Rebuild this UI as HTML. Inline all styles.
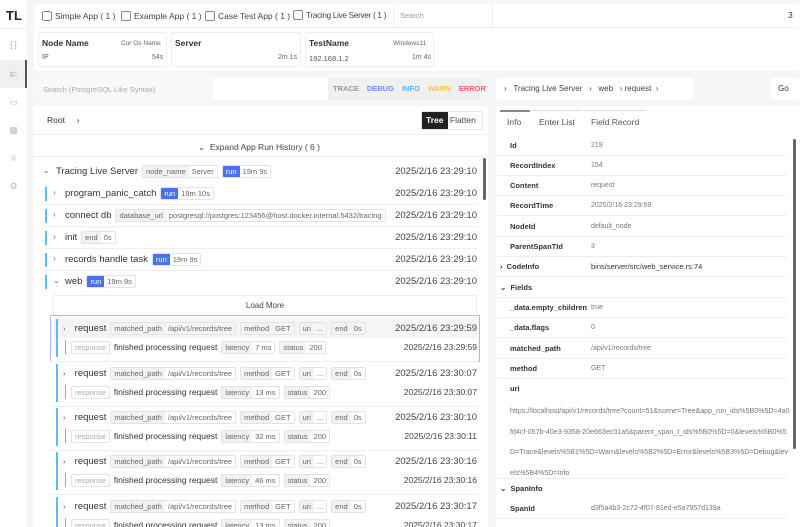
<!DOCTYPE html>
<html><head><meta charset="utf-8"><style>
*{box-sizing:border-box;margin:0;padding:0}
html,body{width:800px;height:527px;overflow:hidden}
body{background:#f5f6f8;font-family:"Liberation Sans",sans-serif;font-size:9px;color:#333;position:relative}
.a{position:absolute}
.side{left:0;top:0;width:27px;height:527px;background:#fff}
.ico{position:absolute;left:7px;width:13px;height:10px;color:#bbb;font-size:9px;text-align:center}
.w{background:#fff}
.cb{display:inline-block;width:10px;height:10px;border:1px solid #888;border-radius:2px;vertical-align:-2px;margin-right:3px}
.card{background:#fff;border:1px solid #eee;border-radius:2px}
.fx{display:flex;align-items:center;white-space:nowrap}
.tag{display:flex;border:1px solid #e3e3e3;border-radius:2px;font-size:7.5px;line-height:11px;margin-left:4px;overflow:hidden;white-space:nowrap;height:13px}
.tag b{font-weight:normal;background:#f2f2f2;color:#666;padding:0 3px;line-height:11px}
.tag i{font-style:normal;padding:0 3px;color:#666;line-height:11px}
.run b{background:#4a73e8;color:#fff}
.row{position:absolute;left:45px;width:432px;height:22px;border-bottom:1px solid #eee;font-size:9.5px}
.row .bar{position:absolute;left:0;top:4px;width:2px;height:14px;background:#5bbcf5}
.row .ch{position:absolute;left:8px;top:5px;color:#666;font-size:8px}
.row .t{position:absolute;left:20px;top:0;height:21px}
.row .d{position:absolute;right:0;top:5px;font-size:9.5px;color:#444}
.sub{position:absolute;height:18px;font-size:8.5px}
.kv{position:absolute;left:497px;width:290px;height:20px;line-height:20px;border-bottom:1px solid #eee;font-size:7px;color:#777;background:#fff}
.kv b{position:absolute;left:13px;color:#333;font-size:7.5px}
.kv span{position:absolute;left:94px}
</style></head><body>
<div class="a side">
 <div class="a" style="left:6px;top:8px;font-size:13px;font-weight:bold;color:#222">TL</div>
 <div class="a" style="left:0;top:28px;width:27px;height:1px;background:#eee"></div>
 <div class="ico" style="top:40px">⁅⁆</div>
 <div class="a" style="left:0;top:60px;width:27px;height:28px;background:#f0f0f0;border-right:2px solid #555"></div>
 <div class="ico" style="top:69px">⇇</div>
 <div class="ico" style="top:97px">▭</div>
 <div class="ico" style="top:125px">▦</div>
 <div class="ico" style="top:153px">♕</div>
 <div class="ico" style="top:181px">⚙</div>
</div>
<div class="a w" style="left:34px;top:4px;width:766px;height:67px;border-radius:3px"></div>
<div class="a" style="left:42px;top:10px;font-size:8.5px;color:#444;white-space:nowrap;line-height:12px"><span class="cb"></span>Simple App ( 1 )</div>
<div class="a" style="left:121px;top:10px;font-size:8.5px;color:#444;white-space:nowrap;line-height:12px"><span class="cb"></span>Example App ( 1 )</div>
<div class="a" style="left:205px;top:10px;font-size:8.5px;color:#444;white-space:nowrap;line-height:12px"><span class="cb"></span>Case Test App ( 1 )</div>
<div class="a" style="left:293px;top:10px;font-size:8.2px;color:#444;white-space:nowrap;line-height:12px;letter-spacing:-0.3px"><span class="cb"></span>Tracing Live Server ( 1 )</div>
<div class="a" style="left:393px;top:5px;width:1px;height:22px;background:#eee"></div>
<div class="a" style="left:492px;top:5px;width:1px;height:22px;background:#eee"></div>
<div class="a" style="left:400px;top:11px;font-size:7.5px;color:#999">Search</div>
<div class="a" style="left:788px;top:10px;font-size:8.5px">3</div>
<div class="a" style="left:37px;top:27px;width:760px;height:1px;background:#eee"></div>
<div class="a card" style="left:38px;top:32px;width:129px;height:35px"></div>
<div class="a" style="left:42px;top:38px;font-size:8.5px;font-weight:bold">Node Name</div>
<div class="a" style="left:121px;top:40px;font-size:6.5px;color:#666">Cur Os Name</div>
<div class="a" style="left:42px;top:54px;font-size:7px;color:#555">IP</div>
<div class="a" style="left:152px;top:54px;font-size:7px;color:#666">54s</div>
<div class="a card" style="left:171px;top:32px;width:130px;height:35px"></div>
<div class="a" style="left:175px;top:38px;font-size:8.5px;font-weight:bold">Server</div>
<div class="a" style="left:278px;top:54px;font-size:7px;color:#666">2m 1s</div>
<div class="a card" style="left:305px;top:32px;width:129px;height:35px"></div>
<div class="a" style="left:309px;top:38px;font-size:8.5px;font-weight:bold">TestName</div>
<div class="a" style="left:393px;top:40px;font-size:6.5px;color:#666">Windows11</div>
<div class="a" style="left:309px;top:54px;font-size:7.5px;color:#555">192.168.1.2</div>
<div class="a" style="left:412px;top:54px;font-size:7px;color:#666">1m 4s</div>

<div class="a" style="left:37px;top:78px;width:176px;height:22px;background:#f8f8f8"></div>
<div class="a" style="left:43px;top:85px;font-size:7.5px;color:#aaa">Search (PostgreSQL Like Syntax)</div>
<div class="a w" style="left:213px;top:78px;width:115px;height:22px"></div>
<div class="a" style="left:328px;top:78px;width:154px;height:22px;background:#f0f0f0;font-size:7.5px;font-weight:bold;line-height:22px;white-space:nowrap">
<span style="margin-left:5px;color:#999">TRACE</span><span style="margin-left:8px;color:#6a8ef5">DEBUG</span><span style="margin-left:8px;color:#5bb0f5">INFO</span><span style="margin-left:8px;color:#f5c542">WARN</span><span style="margin-left:8px;color:#f06060">ERROR</span></div>
<div class="a w" style="left:496px;top:78px;width:198px;height:22px;border-radius:3px;font-size:8px;line-height:22px;color:#444;white-space:nowrap"><span style="margin-left:8px">›</span>&nbsp;&nbsp;&nbsp;Tracing Live Server&nbsp;&nbsp;&nbsp;›&nbsp;&nbsp;&nbsp;web&nbsp;&nbsp;&nbsp;›&nbsp;request&nbsp;&nbsp;›</div>
<div class="a w" style="left:770px;top:78px;width:30px;height:22px;border-radius:3px;font-size:8px;line-height:22px;padding-left:8px">Go</div>

<div class="a w" style="left:33px;top:106px;width:455px;height:421px"></div>
<div class="a" style="left:47px;top:115px;font-size:8.5px">Root&nbsp;&nbsp;&nbsp;&nbsp;&nbsp;›</div>
<div class="a" style="left:421px;top:111px;width:62px;height:19px;border:1px solid #e5e5e5;border-radius:2px;font-size:8.5px;line-height:17px"><span style="background:#222;color:#fff;font-weight:bold;padding:2px 4px;display:inline-block;line-height:13px">Tree</span> <span style="color:#444">Flatten</span></div>
<div class="a" style="left:33px;top:134px;width:455px;height:1px;background:#eee"></div>
<div class="a" style="left:198px;top:142px;font-size:8.5px;color:#444">⌄&nbsp;&nbsp;Expand App Run History ( 6 )</div>
<div class="a" style="left:33px;top:156px;width:455px;height:1px;background:#eee"></div>
<div class="a" style="left:483px;top:158px;width:3px;height:42px;background:#666;border-radius:2px"></div>

<div class="row" style="left:40px;width:437px;top:161px;border:none"><span class="ch" style="left:3px">⌄</span><span class="t fx" style="left:16px">Tracing Live Server<span class="tag"><b>node_name</b><i>Server</i></span><span class="tag run"><b>run</b><i>19m 9s</i></span></span><span class="d">2025/2/16 23:29:10</span></div>
<div class="row" style="top:183px"><span class="bar"></span><span class="ch">›</span><span class="t fx">program_panic_catch<span class="tag run"><b>run</b><i>19m 10s</i></span></span><span class="d">2025/2/16 23:29:10</span></div>
<div class="row" style="top:205px;overflow:hidden"><span class="bar"></span><span class="ch">›</span><span class="t fx">connect db<span class="tag"><b>database_url</b><i>postgresql://postgres:123456@host.docker.internal:5432/tracing</i></span><span class="tag"><b>end</b></span></span><span class="d" style="background:#fff;padding-left:6px;top:0;line-height:21px">2025/2/16 23:29:10</span></div>
<div class="row" style="top:227px"><span class="bar"></span><span class="ch">›</span><span class="t fx">init<span class="tag"><b>end</b><i>0s</i></span></span><span class="d">2025/2/16 23:29:10</span></div>
<div class="row" style="top:249px"><span class="bar"></span><span class="ch">›</span><span class="t fx">records handle task<span class="tag run"><b>run</b><i>19m 9s</i></span></span><span class="d">2025/2/16 23:29:10</span></div>
<div class="row" style="top:271px;border:none"><span class="bar"></span><span class="ch">⌄</span><span class="t fx">web<span class="tag run"><b>run</b><i>19m 9s</i></span></span><span class="d">2025/2/16 23:29:10</span></div>
<div class="a" style="left:53px;top:295px;width:424px;height:20px;border:1px solid #eee;border-bottom:none;text-align:center;line-height:20px;font-size:8px;color:#444">Load More</div>
<div class="a" style="left:50px;top:315px;width:430px;height:47px;border:1px solid #a8b8f5"></div>
<div class="a" style="left:54px;top:317px;width:423px;height:21px;background:#f5f5f5"></div>

<div id="reqs"></div>
<script>
var data=[[317,"2025/2/16 23:29:59","7 ms","2025/2/16 23:29:59"],[362,"2025/2/16 23:30:07","13 ms","2025/2/16 23:30:07"],[406,"2025/2/16 23:30:10","32 ms","2025/2/16 23:30:11"],[450,"2025/2/16 23:30:16","46 ms","2025/2/16 23:30:16"],[495,"2025/2/16 23:30:17","13 ms","2025/2/16 23:30:17"]];
var h="";
data.forEach(function(r){var y=r[0];
h+='<div class="a" style="left:56px;top:'+(y+2)+'px;width:2px;height:38px;background:#5bbcf5"></div>';
h+='<div class="sub fx" style="left:63px;top:'+(y+2)+'px;font-size:9.5px"><span style="color:#666;font-size:8px;margin-right:9px">›</span>request<span class="tag"><b>matched_path</b><i>/api/v1/records/tree</i></span><span class="tag"><b>method</b><i>GET</i></span><span class="tag"><b>uri</b><i>...</i></span><span class="tag"><b>end</b><i>0s</i></span></div>';
h+='<div class="sub fx" style="right:323px;top:'+(y+2)+'px;font-size:9.5px;color:#444">'+r[1]+'</div>';
h+='<div class="a" style="left:65px;top:'+(y+23)+'px;width:1px;height:14px;background:#5bbcf5"></div>';
h+='<div class="sub fx" style="left:67px;top:'+(y+21)+'px"><span class="tag" style="color:#aaa;padding:0 3px;font-size:7.5px;line-height:11px;margin-right:4px">response</span>finished processing request<span class="tag"><b>latency</b><i>'+r[2]+'</i></span><span class="tag"><b>status</b><i>200</i></span></div>';
h+='<div class="sub fx" style="right:323px;top:'+(y+21)+'px;font-size:8.5px;color:#444">'+r[3]+'</div>';
h+='<div class="a" style="left:50px;top:'+(y+44)+'px;width:428px;height:1px;background:#eee"></div>';
});
document.getElementById("reqs").innerHTML=h;
</script>

<div class="a w" style="left:496px;top:106px;width:304px;height:421px"></div>
<div class="a" style="left:500px;top:110px;width:30px;height:2px;background:#888"></div>
<div class="a" style="left:532px;top:110px;width:50px;height:1px;background:#ddd"></div>
<div class="a" style="left:584px;top:110px;width:62px;height:1px;background:#ddd"></div>
<div class="a" style="left:507px;top:117px;font-size:8.5px;color:#555">Info</div>
<div class="a" style="left:539px;top:117px;font-size:8.5px;color:#555">Enter List</div>
<div class="a" style="left:591px;top:117px;font-size:8.5px;color:#555">Field Record</div>
<div class="a" style="left:793px;top:139px;width:3px;height:310px;background:#666;border-radius:2px"></div>
<div class="kv" style="top:136px"><b>Id</b><span>219</span></div>
<div class="kv" style="top:156px"><b>RecordIndex</b><span>154</span></div>
<div class="kv" style="top:176px"><b>Content</b><span>request</span></div>
<div class="kv" style="top:196px"><b>RecordTime</b><span>2025/2/16 23:29:59</span></div>
<div class="kv" style="top:217px"><b>NodeId</b><span>default_node</span></div>
<div class="kv" style="top:237px"><b>ParentSpanTId</b><span>3</span></div>
<div class="kv" style="top:257px"><b style="left:3px">›&nbsp;&nbsp;CodeInfo</b><span style="color:#333;font-size:7.5px">bins/server/src/web_service.rs:74</span></div>
<div class="kv" style="top:278px"><b style="left:3px">⌄&nbsp;&nbsp;Fields</b></div>
<div class="kv" style="top:298px"><b>_data.empty_children</b><span style="left:94px">true</span></div>
<div class="kv" style="top:318px"><b>_data.flags</b><span>0</span></div>
<div class="kv" style="top:339px"><b>matched_path</b><span>/api/v1/records/tree</span></div>
<div class="kv" style="top:359px"><b>method</b><span>GET</span></div>
<div class="kv" style="top:379px;height:100px"><b>uri</b></div>
<div class="a" style="left:510px;top:401px;width:280px;font-size:7.1px;color:#777;line-height:20.5px;word-break:break-all">https://localhost/api/v1/records/tree?count=51&amp;scene=Tree&amp;app_run_ids%5B0%5D=4a0fd4cf-057b-40e3-9358-20e663ec01a5&amp;parent_span_t_ids%5B0%5D=0&amp;levels%5B0%5D=Trace&amp;levels%5B1%5D=Warn&amp;levels%5B2%5D=Error&amp;levels%5B3%5D=Debug&amp;levels%5B4%5D=Info</div>
<div class="kv" style="top:479px;border:none"><b style="left:3px">⌄&nbsp;&nbsp;SpanInfo</b></div>
<div class="kv" style="top:499px"><b>SpanId</b><span>d3f5a4b3-2c72-4f07-81ed-e5a7957d139a</span></div>
</body></html>
